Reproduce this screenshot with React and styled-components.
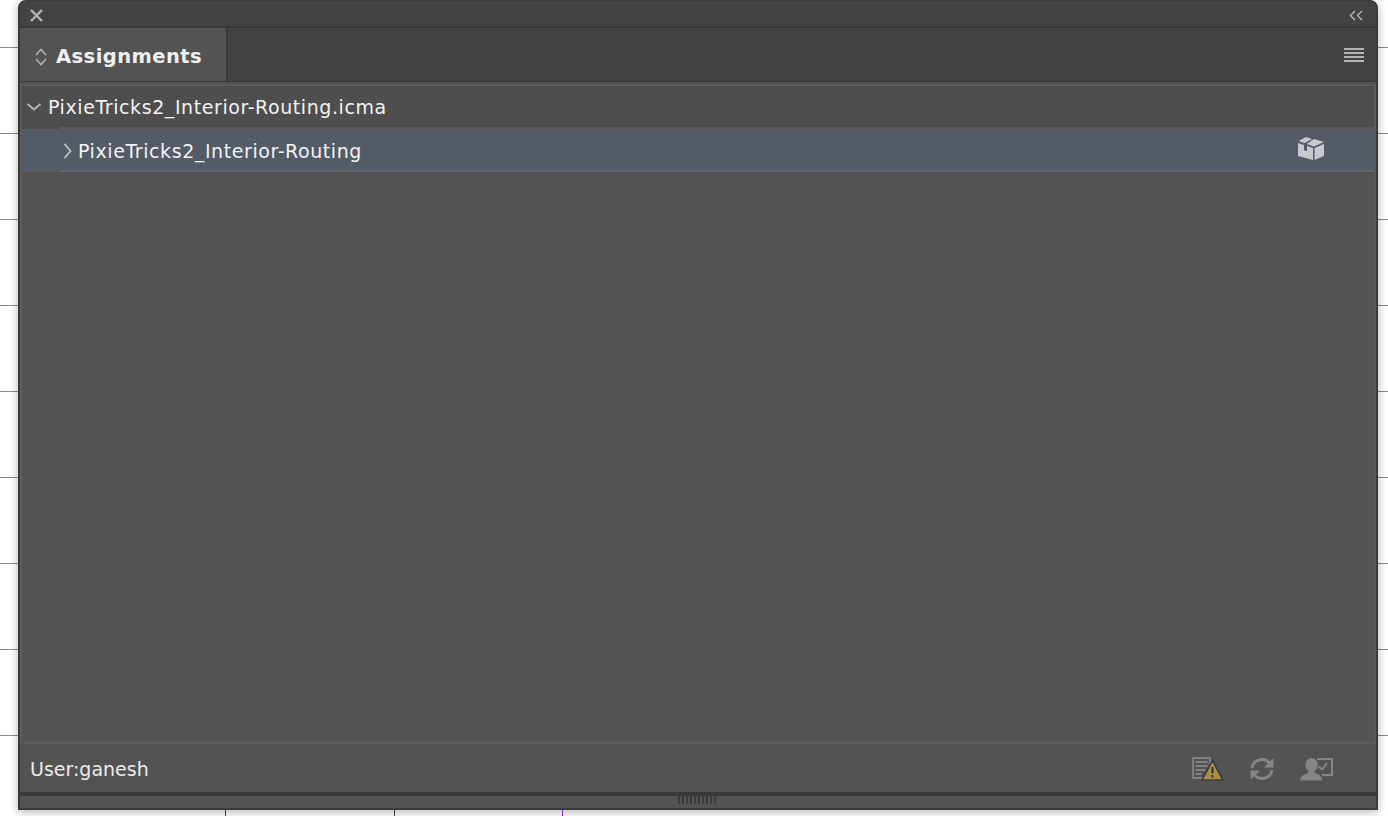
import React from 'react';
import styled, { createGlobalStyle } from 'styled-components';

const Global = createGlobalStyle`
  html, body {
    margin: 0;
    padding: 0;
    height: 816px;
    overflow: hidden;
    background: #fff;
  }
`;

const Page = styled.div`
  position: relative;
  width: 1388px;
  height: 816px;
  padding: 0 10px 0 18px;
  box-sizing: border-box;
  font-family: "DejaVu Sans", sans-serif;
  background-image: repeating-linear-gradient(
    to bottom,
    transparent 0 47px,
    #5b94dc 47px 48px,
    transparent 48px 86px
  );
  background-size: 100% 736px;
  background-repeat: no-repeat;
`;

const Guide = styled.div`
  position: absolute;
  left: ${(p) => p.$x}px;
  bottom: 0;
  width: 1px;
  height: 6px;
  background: ${(p) => p.$color};
`;

const Panel = styled.div`
  position: relative;
  height: 810px;
  box-sizing: border-box;
  border: 2px solid #3a3a3a;
  border-top-width: 1px;
  border-radius: 8px 8px 0 0;
  background: #535353;
  display: flex;
  flex-direction: column;
  box-shadow: 0 2px 10px rgba(0, 0, 0, 0.3);
`;

const TitleStrip = styled.div`
  height: 22px;
  flex: none;
  background: #434343;
  border-bottom: 2px solid #393939;
  border-radius: 6px 6px 0 0;
  display: flex;
  align-items: center;
  justify-content: space-between;
  padding: 3px 13px 0 10px;
`;

const TabBar = styled.div`
  height: 53px;
  flex: none;
  background: #434343;
  display: flex;
  align-items: stretch;
  justify-content: space-between;
  padding-right: 12px;
`;

const Tab = styled.div`
  width: 208px;
  box-sizing: border-box;
  background: #535353;
  border-right: 2px solid #393939;
  display: flex;
  align-items: center;
  gap: 9px;
  padding: 4px 0 0 15px;
`;

const TabLabel = styled.span`
  color: #f0f0f0;
  font-size: 19.5px;
  font-weight: 700;
  letter-spacing: 0.45px;
`;

const MenuButton = styled.div`
  display: flex;
  align-items: center;
`;

const TabRule = styled.div`
  height: 1px;
  flex: none;
  background: #393939;
`;

const Tree = styled.div`
  flex: 1;
  margin-top: 2px;
  border-top: 2px solid #5b5b5b;
  border-left: 2px solid #5b5b5b;
  border-right: 2px solid #5b5b5b;
  display: flex;
  flex-direction: column;
`;

const Row = styled.div`
  position: relative;
  height: ${(p) => p.$height}px;
  flex: none;
  box-sizing: border-box;
  display: flex;
  align-items: center;
  padding-left: ${(p) => p.$indent}px;
  padding-right: 49px;
  padding-bottom: ${(p) => (p.$selected ? 0 : 2)}px;
  gap: ${(p) => p.$gap}px;
  background: ${(p) => (p.$selected ? '#525b66' : '#4e4e4e')};

  &::after {
    content: '';
    position: absolute;
    left: 38px;
    right: 0;
    bottom: 0;
    height: 2px;
    background: ${(p) => (p.$selected ? '#5c6874' : '#5b5b5b')};
  }
`;

const RowLabel = styled.span`
  color: #f2f2f2;
  font-size: 19px;
  letter-spacing: 0.58px;
  flex: 1;
  white-space: nowrap;
`;

const RowBadge = styled.span`
  display: flex;
  margin-bottom: 4px;
`;

const Footer = styled.div`
  height: 50px;
  flex: none;
  box-sizing: border-box;
  border-top: 2px solid #5b5b5b;
  display: flex;
  align-items: center;
  justify-content: space-between;
  padding: 2px 43px 0 10px;
`;

const UserName = styled.span`
  color: #ececec;
  font-size: 19px;
`;

const FooterIcons = styled.div`
  display: flex;
  align-items: center;
  gap: 26px;
`;

const ResizeBar = styled.div`
  height: 16px;
  flex: none;
  box-sizing: border-box;
  border-top: 4px solid #393939;
  display: flex;
  justify-content: center;
`;

const Grip = styled.div`
  width: 38px;
  height: 8px;
  margin-left: -2px;
  background: repeating-linear-gradient(to right, #3c3c3c 0 2px, transparent 2px 4px);
`;

const Chevron = ({ dir }) => (
  <svg width="14" height="16" viewBox="0 0 14 16" fill="none" stroke="#b8b8b8" strokeWidth="1.9">
    {dir === 'down' ? <path d="M0.500 5l6.500 5.500L13.500 5" /> : <path d="M3.500 0.800L9.500 8l-6 7.200" />}
  </svg>
);

const CloseIcon = () => (
  <svg width="13" height="13" viewBox="0 0 13 13" stroke="#b6b6b6" strokeWidth="2.4">
    <path d="M1 1l11 11M12 1L1 12" />
  </svg>
);

const CollapseIcon = () => (
  <svg width="14" height="11" viewBox="0 0 14 11" fill="none" stroke="#b6b6b6" strokeWidth="1.4">
    <path d="M6 1L1.500 5.500 6 10M13 1L8.500 5.500 13 10" />
  </svg>
);

const SortIcon = () => (
  <svg width="12" height="18" viewBox="0 0 12 18" fill="none" stroke="#b0b0b0" strokeWidth="1.6">
    <path d="M1 7l5-5.500L11 7M1 11l5 5.500 5-5.500" />
  </svg>
);

const MenuIcon = () => (
  <svg width="20" height="14" viewBox="0 0 20 14" fill="#b4b4b4">
    <rect y="0" width="20" height="2" />
    <rect y="4" width="20" height="2" />
    <rect y="8" width="20" height="2" />
    <rect y="12" width="20" height="2" />
  </svg>
);

const BoxIcon = () => (
  <svg width="27" height="24" viewBox="0 0 27 24" fill="#c6cacf">
    <path d="M0.500 4L8 0l6 2-7.500 4z" />
    <path d="M8.500 7L16 2l10 3-10 4.500z" />
    <path d="M0 6l6 2v5.500l3 .5V9l6 2v12L0 19z" />
    <path d="M16.500 11L26 7v12l-9.500 4z" />
  </svg>
);

const ReportIcon = () => (
  <svg width="32" height="24" viewBox="0 0 32 24">
    <path d="M1 1h17v20H1z" fill="none" stroke="#828282" strokeWidth="1.800" />
    <path d="M3.500 5h12M3.500 9h12M3.500 13h10M3.500 17h6" stroke="#828282" strokeWidth="2" />
    <path d="M20.500 3.500L31 23H10z" fill="#a8904a" stroke="#3c3c3c" strokeWidth="1.600" />
    <path d="M20.500 10v6.500M20.500 18v2.400" stroke="#2e2e2e" strokeWidth="2" />
  </svg>
);

const SyncIcon = () => (
  <svg width="24" height="24" viewBox="0 0 24 24" fill="none" stroke="#858585" strokeWidth="3">
    <path d="M2 11C3 5.500 7 2.500 12 2.500c3.500 0 6 1.500 7.500 4" />
    <path d="M22 13c-1 5.500-5 8.500-10 8.500-3.500 0-6-1.500-7.500-4" />
    <path d="M23.500 1v9.500H14z" fill="#858585" stroke="none" />
    <path d="M0.500 23v-9.500H10z" fill="#858585" stroke="none" />
  </svg>
);

const UserCheckIcon = () => (
  <svg width="33" height="24" viewBox="0 0 33 24">
    <path d="M17 2h15v16H22" fill="none" stroke="#858585" strokeWidth="2" />
    <path d="M19 9.500l3 3 5-6.500" fill="none" stroke="#858585" strokeWidth="2" />
    <ellipse cx="11.500" cy="8" rx="6.200" ry="7" fill="#858585" />
    <path d="M8.500 12h6v4h-6z" fill="#858585" />
    <path d="M0 23.500c0-4 3-6 8.500-7.500h6c5 1.500 7.500 3.500 7.500 7.500z" fill="#858585" />
  </svg>
);

const App = () => (
  <Page>
    <Global />
    <Panel>
      <TitleStrip>
        <CloseIcon />
        <CollapseIcon />
      </TitleStrip>
      <TabBar>
        <Tab>
          <SortIcon />
          <TabLabel>Assignments</TabLabel>
        </Tab>
        <MenuButton>
          <MenuIcon />
        </MenuButton>
      </TabBar>
      <TabRule />
      <Tree>
        <Row $height={43} $indent={5} $gap={7}>
          <Chevron dir="down" />
          <RowLabel>PixieTricks2_Interior-Routing.icma</RowLabel>
        </Row>
        <Row $height={43} $indent={39} $gap={3} $selected>
          <Chevron dir="right" />
          <RowLabel>PixieTricks2_Interior-Routing</RowLabel>
          <RowBadge>
            <BoxIcon />
          </RowBadge>
        </Row>
      </Tree>
      <Footer>
        <UserName>User:ganesh</UserName>
        <FooterIcons>
          <ReportIcon />
          <SyncIcon />
          <UserCheckIcon />
        </FooterIcons>
      </Footer>
      <ResizeBar>
        <Grip />
      </ResizeBar>
    </Panel>
    <Guide $x={225} $color="#3a3a3a" />
    <Guide $x={394} $color="#3a3a3a" />
    <Guide $x={562} $color="#8a2be2" />
  </Page>
);

export default App;
